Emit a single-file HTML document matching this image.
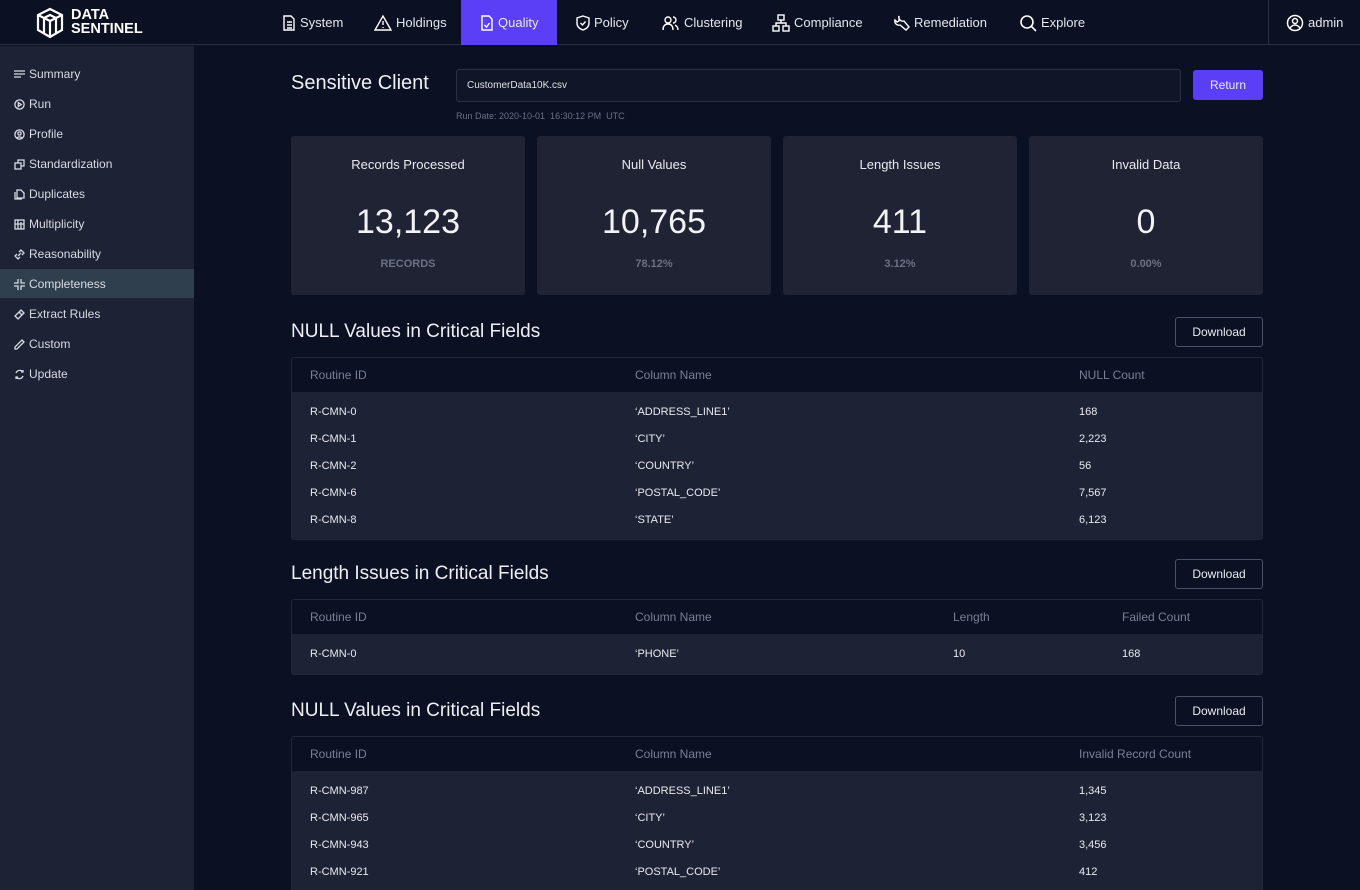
<!DOCTYPE html>
<html style="overflow:hidden;height:890px"><head><meta charset="utf-8"><style>
*{box-sizing:border-box;margin:0;padding:0}
body{width:1360px;height:890px;overflow:hidden;background:#0b1023;font-family:"Liberation Sans",sans-serif;color:#e8eaf0;position:relative}
.a{position:absolute}
.hdr{left:0;top:0;width:1360px;height:45px;background:#0b1023;border-bottom:1px solid #2a3142}
.nav{top:0;height:45px;display:flex;align-items:center;font-size:13px;color:#e6e8ee}
.nav svg{margin-right:4px}
.side{left:0;top:46px;width:194px;height:844px;background:#1e2235}
.si{position:absolute;left:0;width:194px;height:30px;display:flex;align-items:center;padding-left:14px;font-size:12px;color:#d8dbe4}
.si svg{margin-right:4px}
.card{top:136px;width:234px;height:159px;background:#1f2334;border-radius:3px;text-align:center}
.card .t{position:absolute;top:21px;width:100%;font-size:13px;color:#e8eaf0}
.card .n{position:absolute;top:67px;width:100%;font-size:34px;color:#f2f3f6}
.card .s{position:absolute;top:122px;width:100%;font-size:11px;font-weight:bold;color:#6b7083}
.h2{left:291px;font-size:19px;color:#eef0f4}
.btn{left:1175px;width:88px;height:30px;border:1px solid #4a5366;border-radius:3px;font-size:12px;text-align:center;line-height:28px;color:#e8eaf0}
.tbl{left:291px;width:972px;background:#1e2235;border:1px solid #232838;border-radius:3px;overflow:hidden}
.th{height:34px;background:#0b1023;position:relative;font-size:12px;color:#7a8093}
.th span,.tr span{position:absolute;top:50%;transform:translateY(-50%)}
.tr{height:27px;position:relative;font-size:11px;color:#e8eaf0}
</style></head><body>
<div class="a hdr"></div>
<svg class="a" style="left:35px;top:7px" width="30" height="32" viewBox="0 0 30 32" fill="none" stroke="#fff" stroke-width="2.2"><path d="M15 2 L27 8 V23 L15 30 L3 23 V8 Z"/><path d="M3 8 L15 14 L27 8 M15 14 V30 M9 11 V27 M21 11 V27 M9 11 L15 8 L21 11"/></svg>
<div class="a" style="left:71px;top:8px;font-size:14.5px;font-weight:bold;line-height:14px;color:#fff">DATA<br>SENTINEL</div>
<div class="a" style="left:461px;top:0;width:96px;height:45px;background:#5a3ff6"></div>
<div class="a nav" style="left:282px"><svg width="14" height="16" viewBox="0 0 14 16" fill="none" stroke="#fff" stroke-width="1.4"><path d="M2 1h7l3 3v11H2z M5 7h5M5 10h5M5 13h5"/></svg>System</div>
<div class="a nav" style="left:374px"><svg width="18" height="16" viewBox="0 0 18 16" fill="none" stroke="#fff" stroke-width="1.4"><path d="M9 1L17 15H1Z M9 6v4 M9 12v1"/></svg>Holdings</div>
<div class="a nav" style="left:480px"><svg width="14" height="16" viewBox="0 0 14 16" fill="none" stroke="#fff" stroke-width="1.4"><path d="M2 1h7l3 3v11H2z M4.5 10l2 2 3-4"/></svg>Quality</div>
<div class="a nav" style="left:576px"><svg width="14" height="16" viewBox="0 0 14 16" fill="none" stroke="#fff" stroke-width="1.4"><path d="M7 1l6 2v5c0 4-3 6-6 7-3-1-6-3-6-7V3z M4.5 8l2 2 3-3.5"/></svg>Policy</div>
<div class="a nav" style="left:662px"><svg width="18" height="16" viewBox="0 0 18 16" fill="none" stroke="#fff" stroke-width="1.4"><circle cx="6" cy="5" r="3"/><path d="M1 15c0-4 2-6 5-6s5 2 5 6 M11 2a3 3 0 010 6 M13 10c2 1 3 3 3 5"/></svg>Clustering</div>
<div class="a nav" style="left:772px"><svg width="18" height="18" viewBox="0 0 18 18" fill="none" stroke="#fff" stroke-width="1.4"><rect x="6" y="1" width="6" height="5"/><rect x="1" y="12" width="6" height="5"/><rect x="11" y="12" width="6" height="5"/><path d="M9 6v3M4 12V9h10v3"/></svg>Compliance</div>
<div class="a nav" style="left:894px"><svg width="16" height="16" viewBox="0 0 16 16" fill="none" stroke="#fff" stroke-width="1.4"><path d="M5 1a4 4 0 005 5l5 6-3 3-6-5a4 4 0 01-5-5l2 2 2-1 0-2z"/></svg>Remediation</div>
<div class="a nav" style="left:1019px"><svg width="18" height="18" viewBox="0 0 18 18" fill="none" stroke="#fff" stroke-width="1.6"><circle cx="8" cy="8" r="6"/><path d="M12.5 12.5L17 17"/></svg>Explore</div>
<div class="a" style="left:1268px;top:0;width:1px;height:45px;background:#2a3142"></div>
<div class="a nav" style="left:1286px"><svg width="18" height="18" viewBox="0 0 18 18" fill="none" stroke="#fff" stroke-width="1.5"><circle cx="9" cy="9" r="7.5"/><circle cx="9" cy="7" r="2.5"/><path d="M4 14c1.5-2 3-3 5-3s3.5 1 5 3"/></svg>admin</div>

<div class="a side"></div>
<div class="a" style="left:0;top:269px;width:194px;height:29px;background:#2f3f4e"></div>
<div class="si" style="top:59px"><svg width="11" height="10" viewBox="0 0 11 10" stroke="#d8dbe4" stroke-width="1.3"><path d="M0 2h11M0 5h11M0 8h7"/></svg>Summary</div>
<div class="si" style="top:89px"><svg width="11" height="11" viewBox="0 0 11 11" fill="none" stroke="#d8dbe4" stroke-width="1.3"><circle cx="5.5" cy="5.5" r="4.6"/><path d="M4.3 3.5l3 2-3 2z"/></svg>Run</div>
<div class="si" style="top:119px"><svg width="11" height="11" viewBox="0 0 11 11" fill="none" stroke="#d8dbe4" stroke-width="1.3"><circle cx="5.5" cy="5.5" r="4.6"/><circle cx="5.5" cy="4.5" r="1.6"/><path d="M3 9c1-1.5 4-1.5 5 0"/></svg>Profile</div>
<div class="si" style="top:149px"><svg width="11" height="11" viewBox="0 0 11 11" fill="none" stroke="#d8dbe4" stroke-width="1.3"><rect x="1" y="4" width="6" height="6"/><path d="M4 4V1h6v6H7"/></svg>Standardization</div>
<div class="si" style="top:179px"><svg width="11" height="11" viewBox="0 0 11 11" fill="none" stroke="#d8dbe4" stroke-width="1.3"><path d="M1 3v7h7 M3 1h4l3 3v5H3z"/></svg>Duplicates</div>
<div class="si" style="top:209px"><svg width="11" height="11" viewBox="0 0 11 11" fill="none" stroke="#d8dbe4" stroke-width="1.3"><rect x="1" y="1" width="9" height="9"/><path d="M4 1v9M7 3v7M1 5h9"/></svg>Multiplicity</div>
<div class="si" style="top:239px"><svg width="11" height="11" viewBox="0 0 11 11" fill="none" stroke="#d8dbe4" stroke-width="1.3"><path d="M5 3l2-2 3 3-2 2 M6 8l-2 2-3-3 2-2 M4 7l3-3"/></svg>Reasonability</div>
<div class="si" style="top:269px"><svg width="11" height="11" viewBox="0 0 11 11" fill="none" stroke="#d8dbe4" stroke-width="1.3"><path d="M4 0v4H0M7 0v4h4M4 11V7H0M7 11V7h4"/></svg>Completeness</div>
<div class="si" style="top:299px"><svg width="11" height="11" viewBox="0 0 11 11" fill="none" stroke="#d8dbe4" stroke-width="1.3"><path d="M7 1l3 3-6 6-3-3z M5 3l3 3"/></svg>Extract Rules</div>
<div class="si" style="top:329px"><svg width="11" height="11" viewBox="0 0 11 11" fill="none" stroke="#d8dbe4" stroke-width="1.3"><path d="M8 1l2 2-7 7H1V8z"/></svg>Custom</div>
<div class="si" style="top:359px"><svg width="11" height="11" viewBox="0 0 11 11" fill="none" stroke="#d8dbe4" stroke-width="1.3"><path d="M2 4a4 4 0 017-1M9 7a4 4 0 01-7 1 M9 1v2H7 M2 10V8h2"/></svg>Update</div>

<div class="a" style="left:291px;top:72px;font-size:20px;color:#eef0f4">Sensitive Client</div>
<div class="a" style="left:456px;top:69px;width:725px;height:33px;background:#101527;border:1px solid #2a3142;border-radius:3px;font-size:10px;line-height:31px;padding-left:10px;color:#e0e2e8">CustomerData10K.csv</div>
<div class="a" style="left:1193px;top:70px;width:70px;height:30px;background:#5a3ff6;border-radius:3px;font-size:12px;text-align:center;line-height:30px">Return</div>
<div class="a" style="left:456px;top:111px;font-size:9px;color:#6b7083">Run Date: 2020-10-01&nbsp; 16:30:12 PM&nbsp; UTC</div>

<div class="a card" style="left:291px"><div class="t">Records Processed</div><div class="n">13,123</div><div class="s">RECORDS</div></div>
<div class="a card" style="left:537px"><div class="t">Null Values</div><div class="n">10,765</div><div class="s">78.12%</div></div>
<div class="a card" style="left:783px"><div class="t">Length Issues</div><div class="n">411</div><div class="s">3.12%</div></div>
<div class="a card" style="left:1029px"><div class="t">Invalid Data</div><div class="n">0</div><div class="s">0.00%</div></div>

<div class="a h2" style="top:321px">NULL Values in Critical Fields</div>
<div class="a btn" style="top:317px">Download</div>
<div class="a tbl" style="top:357px;height:183px">
<div class="th"><span style="left:18px">Routine ID</span><span style="left:343px">Column Name</span><span style="left:787px">NULL Count</span></div>
<div style="height:6px"></div>
<div class="tr"><span style="left:18px">R-CMN-0</span><span style="left:343px">‘ADDRESS_LINE1’</span><span style="left:787px">168</span></div>
<div class="tr"><span style="left:18px">R-CMN-1</span><span style="left:343px">‘CITY’</span><span style="left:787px">2,223</span></div>
<div class="tr"><span style="left:18px">R-CMN-2</span><span style="left:343px">‘COUNTRY’</span><span style="left:787px">56</span></div>
<div class="tr"><span style="left:18px">R-CMN-6</span><span style="left:343px">‘POSTAL_CODE’</span><span style="left:787px">7,567</span></div>
<div class="tr"><span style="left:18px">R-CMN-8</span><span style="left:343px">‘STATE’</span><span style="left:787px">6,123</span></div>
</div>

<div class="a h2" style="top:563px">Length Issues in Critical Fields</div>
<div class="a btn" style="top:559px">Download</div>
<div class="a tbl" style="top:599px;height:76px">
<div class="th"><span style="left:18px">Routine ID</span><span style="left:343px">Column Name</span><span style="left:661px">Length</span><span style="left:830px">Failed Count</span></div>
<div style="height:6px"></div>
<div class="tr"><span style="left:18px">R-CMN-0</span><span style="left:343px">‘PHONE’</span><span style="left:661px">10</span><span style="left:830px">168</span></div>
</div>

<div class="a h2" style="top:700px">NULL Values in Critical Fields</div>
<div class="a btn" style="top:696px">Download</div>
<div class="a tbl" style="top:736px;height:154px;border-bottom:none;border-radius:3px 3px 0 0">
<div class="th"><span style="left:18px">Routine ID</span><span style="left:343px">Column Name</span><span style="left:787px">Invalid Record Count</span></div>
<div style="height:6px"></div>
<div class="tr"><span style="left:18px">R-CMN-987</span><span style="left:343px">‘ADDRESS_LINE1’</span><span style="left:787px">1,345</span></div>
<div class="tr"><span style="left:18px">R-CMN-965</span><span style="left:343px">‘CITY’</span><span style="left:787px">3,123</span></div>
<div class="tr"><span style="left:18px">R-CMN-943</span><span style="left:343px">‘COUNTRY’</span><span style="left:787px">3,456</span></div>
<div class="tr"><span style="left:18px">R-CMN-921</span><span style="left:343px">‘POSTAL_CODE’</span><span style="left:787px">412</span></div>
</div>
</body></html>
